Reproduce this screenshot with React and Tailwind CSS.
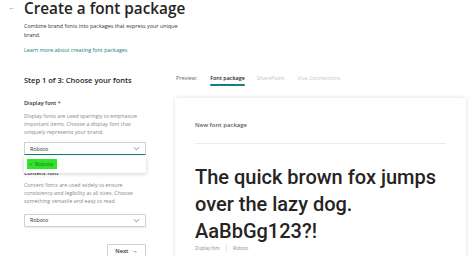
import React from "react";

function Chevron() {
  return (
    <svg width="7" height="5" viewBox="0 0 8 5" fill="none">
      <path d="M1 1l3 3 3-3" stroke="#605e5c" strokeWidth="0.8" />
    </svg>
  );
}

export default function App() {
  return (
    <div className="relative w-[474px] h-[256px] overflow-hidden bg-white font-['Open_Sans',sans-serif] text-[#323130]">
      {/* header */}
      <div className="flex pl-[8px]">
        <div className="w-[16px] pt-[2px] text-[8px] leading-[10px] text-[#8a8886]">←</div>
        <div className="w-[170px]">
          <h1 className="mt-[-2px] text-[15.3px] leading-[20px] font-semibold text-[#252423]">Create a font package</h1>
          <p className="mt-[4px] text-[5.4px] leading-[9px] text-[#323130]">
            Combine brand fonts into packages that express your unique brand.
          </p>
          <p className="mt-[6px] text-[5.4px] leading-[9px] text-[#13807a]">Learn more about creating font packages</p>
        </div>
      </div>

      {/* body */}
      <div className="flex pl-[24px] mt-[20px]">
        {/* left column */}
        <div className="w-[122px] relative">
          <h2 className="text-[7.5px] leading-[10px] font-semibold text-[#252423]">Step 1 of 3: Choose your fonts</h2>
          <div className="mt-[14px] text-[5.6px] leading-[8px] font-semibold text-[#323130]">
            Display font <span className="text-[#a4262c]">*</span>
          </div>
          <p className="mt-[6px] text-[5.3px] leading-[7.8px] text-[#8a8886]">
            Display fonts are used sparingly to emphasize important items. Choose a display font that uniquely represents your brand.
          </p>
          <div className="relative mt-[6px]">
            <div className="h-[13px] flex items-center justify-between px-[5px] border border-[#d2d0ce] border-b-[#13807a] rounded-[1px] text-[5.4px] text-[#323130]">
              <span>Roboto</span>
              <Chevron />
            </div>
            {/* open menu */}
            <div className="absolute left-0 top-[14px] w-[122px] h-[17px] bg-white shadow-[0_1px_4px_rgba(0,0,0,0.18)] z-10 flex items-start pl-[3px] pt-[3px]">
              <div className="flex items-center gap-[2px] h-[10px] w-[30px] px-[2px] bg-[#2fe52a] text-[5.4px] leading-[8px] text-[#1d6e1a]">
                <span className="text-[5px]">✓</span>
                <span>Roboto</span>
              </div>
            </div>
          </div>
          <div className="mt-[14px] text-[5.6px] leading-[8px] font-semibold text-[#323130]">Content font</div>
          <p className="mt-[5px] text-[5.3px] leading-[7.8px] text-[#8a8886]">
            Content fonts are used widely to ensure consistency and legibility at all sizes. Choose something versatile and easy to read.
          </p>
          <div className="mt-[8px] h-[13px] flex items-center justify-between px-[5px] border border-[#d2d0ce] rounded-[1px] shadow-[0_1px_1px_rgba(0,0,0,0.08)] text-[5.4px] text-[#323130]">
            <span>Roboto</span>
            <Chevron />
          </div>
          <div className="flex justify-end mt-[17px]">
            <div className="w-[39px] h-[15px] flex items-center justify-center gap-[3px] border border-[#d2d0ce] rounded-[1px] text-[5.6px] font-semibold text-[#323130]">
              <span>Next</span>
              <span className="text-[6.5px]">→</span>
            </div>
          </div>
        </div>

        {/* right column */}
        <div className="ml-[29px] w-[291px]">
          <div className="flex pl-[1px] mt-[-1px] text-[5.4px] leading-[8px]">
            <span className="text-[#605e5c]">Preview:</span>
            <span className="ml-[13px] flex flex-col font-semibold text-[#252423]">
              Font package
              <span className="mt-[2px] h-[1.5px] bg-[#13807a] rounded-full" />
            </span>
            <span className="ml-[12px] text-[#c8c6c4]">SharePoint</span>
            <span className="ml-[13px] text-[#c8c6c4]">Viva Connections</span>
          </div>
          <div className="mt-[12px] h-[200px] bg-white shadow-[0_0_4px_rgba(0,0,0,0.14)] px-[20px] pt-[23px]">
            <div className="text-[6px] leading-[8px] font-semibold text-[#605e5c]">New font package</div>
            <div className="mt-[14px] h-px bg-[#edebe9]" />
            <div className="mt-[20px] font-['Roboto',sans-serif] font-medium text-[20px] leading-[27px] text-[#252423]">
              The quick brown fox jumps<br />over the lazy dog.<br />AaBbGg123?!
            </div>
            <div className="flex items-center text-[4.5px] leading-[6px] text-[#8a8886]">
              <span>Display font</span>
              <span className="mx-[6px] w-px h-[6px] bg-[#e1dfdd]" />
              <span>Roboto</span>
            </div>
          </div>
        </div>
      </div>
    </div>
  );
}
